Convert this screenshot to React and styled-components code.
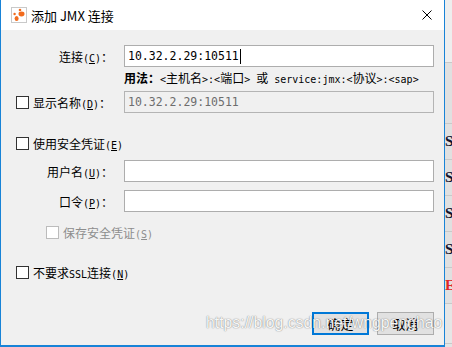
import styled, { createGlobalStyle } from "styled-components";

const GlobalStyle = createGlobalStyle`
  html, body {
    margin: 0;
    padding: 0;
  }
  body {
    width: 452px;
    height: 347px;
    overflow: hidden;
    background: #f0f0f0;
  }
`;

const Screen = styled.div`
  position: relative;
  display: flex;
  width: 452px;
  height: 347px;
  font-family: "Noto Sans CJK SC", sans-serif;
  color: #000;
`;

const Dialog = styled.div`
  width: 445px;
  height: 347px;
  box-sizing: border-box;
  border-left: 1px solid #1883d7;
  border-right: 1px solid #1883d7;
  border-bottom: 2px solid #1883d7;
  background: #f0f0f0;
  display: flex;
  flex-direction: column;
`;

const TitleBar = styled.div`
  height: 30px;
  flex-shrink: 0;
  background: #ffffff;
  display: flex;
  align-items: center;
  padding: 0 12px 0 10px;
  gap: 4px;
`;

const Title = styled.span`
  flex: 1;
  font-size: 13px;
  line-height: 30px;
  padding-top: 1px;
`;

const Body = styled.div`
  flex: 1;
  display: flex;
  flex-direction: column;
  padding: 15px 10px 10px 15px;
  font-size: 12px;
`;

const Row = styled.div`
  display: grid;
  grid-template-columns: 97px 310px;
  column-gap: 11px;
  align-items: center;
  height: 22px;
  margin-top: ${(p) => p.$top || 0}px;
`;

const CheckRow = styled.div`
  display: flex;
  align-items: center;
  gap: 4px;
  height: 22px;
  margin-top: ${(p) => p.$top || 0}px;
  padding-left: ${(p) => p.$indent || 0}px;
  color: ${(p) => (p.$disabled ? "#8d8d8d" : "#000")};
`;

const Label = styled.span`
  text-align: right;
  white-space: nowrap;
`;

const CheckLabel = styled.span`
  display: flex;
  align-items: center;
  gap: 4px;
  white-space: nowrap;
`;

const Half = styled.span`
  font-family: "DejaVu Sans Mono", "Liberation Mono", monospace;
  font-size: 10px;
`;

const Box = styled.span`
  width: 13px;
  height: 13px;
  box-sizing: border-box;
  flex-shrink: 0;
  background: #ffffff;
  border: 1px solid ${(p) => (p.$disabled ? "#bcbcbc" : "#333333")};
`;

const TextBox = styled.div`
  height: 22px;
  box-sizing: border-box;
  border: 1px solid ${(p) => (p.$disabled ? "#b4b4b4" : "#adadad")};
  background: ${(p) => (p.$disabled ? "#f0f0f0" : "#ffffff")};
  color: ${(p) => (p.$disabled ? "#6d6d6d" : "#000")};
  font-family: "DejaVu Sans Mono", "Liberation Mono", monospace;
  font-size: 11.5px;
  line-height: 20px;
  padding-left: 3px;
  display: flex;
  align-items: center;
`;

const Caret = styled.span`
  width: 1px;
  height: 15px;
  background: #000;
  margin-left: 1px;
`;

const Hint = styled.div`
  height: 24px;
  line-height: 22px;
  padding-left: 108px;
  white-space: nowrap;
  font-size: 12px;
`;

const Strong = styled.b`
  font-weight: 700;
`;

const Buttons = styled.div`
  margin-top: auto;
  display: flex;
  justify-content: flex-end;
  gap: 8px;
`;

const Button = styled.div`
  width: 57px;
  height: 23px;
  box-sizing: border-box;
  background: #e1e1e1;
  border: ${(p) => (p.$primary ? "2px solid #0078d7" : "1px solid #adadad")};
  display: flex;
  align-items: center;
  justify-content: center;
  font-size: 13px;
`;

const Backdrop = styled.div`
  flex: 1;
  display: flex;
  flex-direction: column;
  overflow: hidden;
  background: #e4e4e4;
`;

const Band = styled.div`
  height: ${(p) => p.$h}px;
  flex-shrink: 0;
  box-sizing: border-box;
  border-bottom: 1px solid #c9c9c9;
  background: ${(p) => p.$bg || "#e0e0e0"};
  display: flex;
  align-items: center;
  font-family: "Liberation Serif", serif;
  font-weight: 700;
  font-size: 15px;
  color: ${(p) => (p.$red ? "#e0262a" : "#14142e")};
  white-space: nowrap;
`;

const Watermark = styled.div`
  position: absolute;
  left: 206px;
  top: 314px;
  font-family: "Liberation Sans", sans-serif;
  font-size: 15.8px;
  color: rgba(255, 255, 255, 0.95);
  text-shadow: 0 0 1px rgba(0, 0, 0, 0.45), 0 0 2px rgba(0, 0, 0, 0.2);
  pointer-events: none;
`;

function AppIcon() {
  return (
    <svg width="16" height="16" viewBox="0 0 16 16">
      <rect x="0.5" y="0.5" width="15" height="15" fill="#fff" stroke="#c9c9c9" />
      <circle cx="9" cy="3" r="1.3" fill="#f26b1d" />
      <ellipse cx="10.5" cy="7" rx="3" ry="2.4" fill="#f26b1d" />
      <circle cx="3.6" cy="7" r="1.2" fill="#f26b1d" />
      <ellipse cx="5.6" cy="11.4" rx="2" ry="2.5" fill="#f26b1d" />
    </svg>
  );
}

function CloseIcon() {
  return (
    <svg width="10" height="10" viewBox="0 0 10 10">
      <path d="M0.5 0.5 L9.5 9.5 M9.5 0.5 L0.5 9.5" stroke="#000" strokeWidth="1" />
    </svg>
  );
}

export default function App() {
  return (
    <Screen>
      <GlobalStyle />
      <Dialog>
        <TitleBar>
          <AppIcon />
          <Title>添加 JMX 连接</Title>
          <CloseIcon />
        </TitleBar>
        <Body>
          <Row>
            <Label>
              连接<Half>(<u>C</u>)</Half>：
            </Label>
            <TextBox>
              10.32.2.29:10511
              <Caret />
            </TextBox>
          </Row>
          <Hint>
            <Strong>用法：</Strong>
            <Half>&lt;</Half>主机名<Half>&gt;:&lt;</Half>端口<Half>&gt; </Half>或
            <Half> service:jmx:&lt;</Half>协议<Half>&gt;:&lt;sap&gt;</Half>
          </Hint>
          <Row>
            <CheckLabel>
              <Box />
              <span>
                显示名称<Half>(<u>D</u>)</Half>：
              </span>
            </CheckLabel>
            <TextBox $disabled>10.32.2.29:10511</TextBox>
          </Row>
          <CheckRow $top={19}>
            <Box />
            <span>
              使用安全凭证<Half>(<u>E</u>)</Half>
            </span>
          </CheckRow>
          <Row $top={6}>
            <Label>
              用户名<Half>(<u>U</u>)</Half>：
            </Label>
            <TextBox />
          </Row>
          <Row $top={8}>
            <Label>
              口令<Half>(<u>P</u>)</Half>：
            </Label>
            <TextBox />
          </Row>
          <CheckRow $top={9} $indent={30} $disabled>
            <Box $disabled />
            <span>
              保存安全凭证<Half>(<u>S</u>)</Half>
            </span>
          </CheckRow>
          <CheckRow $top={18}>
            <Box />
            <span>
              不要求<Half>SSL</Half>连接<Half>(<u>N</u>)</Half>
            </span>
          </CheckRow>
          <Buttons>
            <Button $primary>确定</Button>
            <Button>取消</Button>
          </Buttons>
        </Body>
      </Dialog>
      <Backdrop>
        <Band $h={63} $bg="#eeeeee" />
        <Band $h={61} />
        <Band $h={36}>S</Band>
        <Band $h={36}>S</Band>
        <Band $h={36}>S</Band>
        <Band $h={36}>S</Band>
        <Band $h={36} $red>
          E
        </Band>
        <Band $h={40} $bg="#e6e6e6" />
      </Backdrop>
      <Watermark>https://blog.csdn.net/wngpenghao</Watermark>
    </Screen>
  );
}
